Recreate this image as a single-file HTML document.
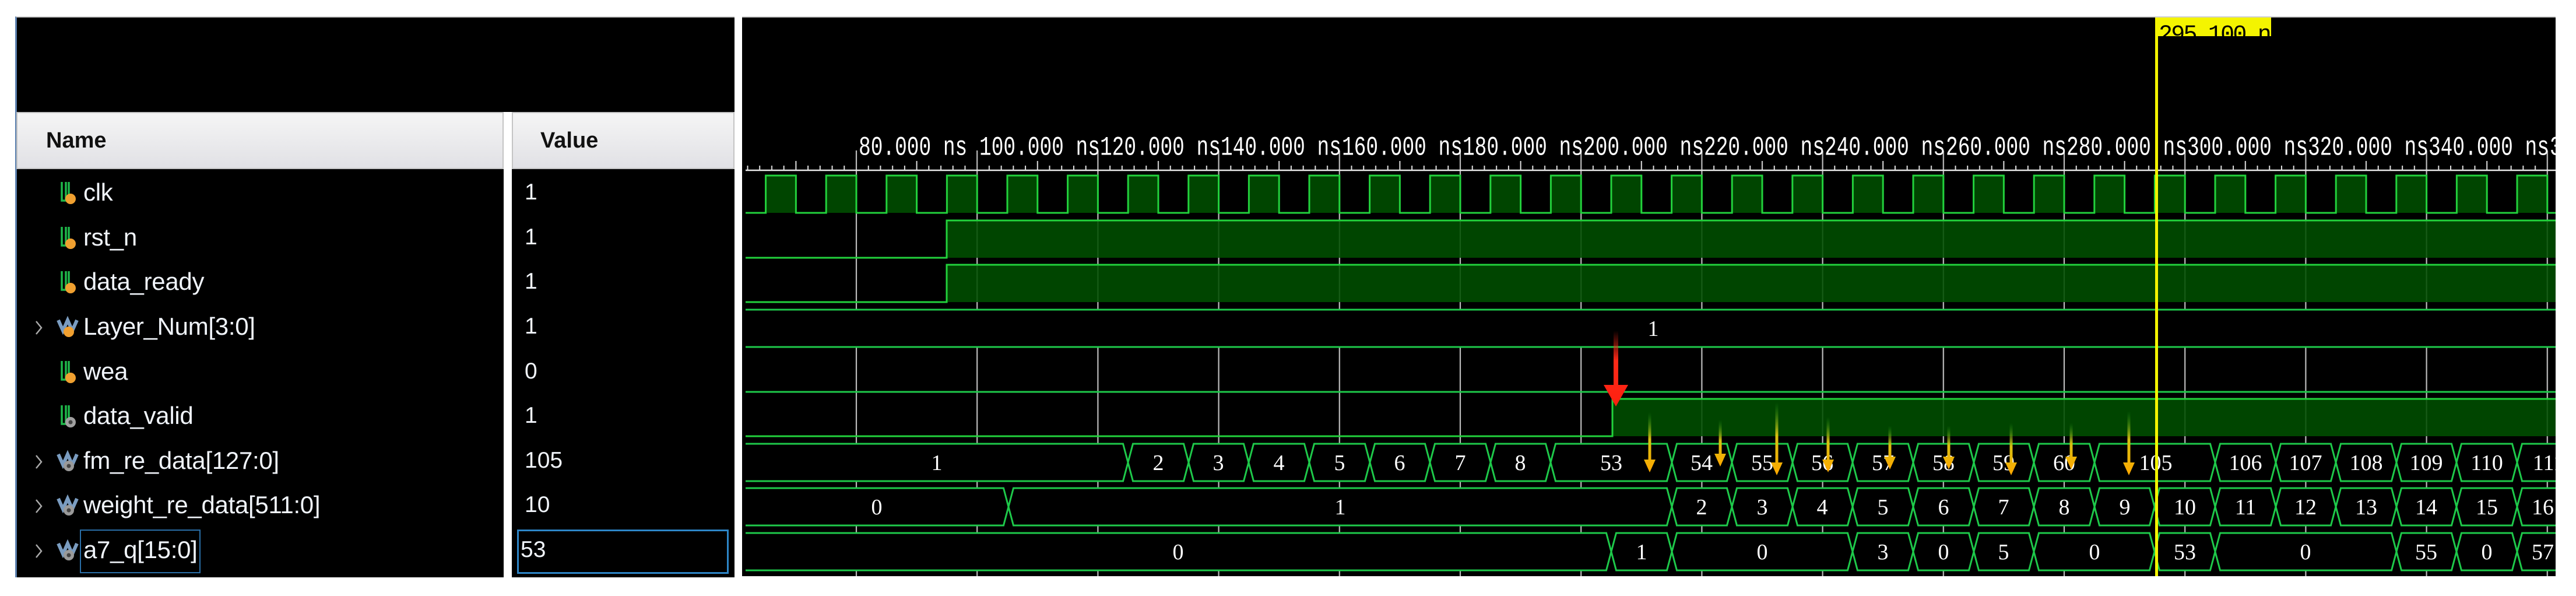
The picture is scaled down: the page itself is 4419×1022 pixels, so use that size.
<!DOCTYPE html>
<html><head><meta charset="utf-8"><style>
html,body{margin:0;padding:0;background:#fff;width:4419px;height:1022px;overflow:hidden;position:relative;font-family:"Liberation Sans",sans-serif}
.a{position:absolute}
.hdr{background:linear-gradient(#f5f5f5,#e1e1e5);border:2px solid #c4c4c4;box-sizing:border-box;font-weight:bold;font-size:38px;color:#111;line-height:94px}
.nm{position:absolute;left:143px;color:#f0f4fa;font-size:42px;line-height:50px;height:50px;letter-spacing:-0.3px}
.vl{position:absolute;left:900px;color:#f0f4fa;font-size:39px;line-height:50px;height:50px}
</style></head><body>
<div class="a" style="left:26px;top:28px;width:1234px;height:962px;background:#000;border-top:2px solid #d0d0d0;border-left:3px solid #5a7fae;box-sizing:border-box"></div>
<div class="a" style="left:864px;top:192px;width:14px;height:798px;background:#fff"></div>
<div class="a hdr" style="left:28px;top:192px;width:836px;height:98px;padding-left:49px">Name</div>
<div class="a hdr" style="left:878px;top:192px;width:382px;height:98px;padding-left:47px">Value</div>

<div class="nm" style="top:305px">clk</div>
<div class="nm" style="top:382px">rst_n</div>
<div class="nm" style="top:458px">data_ready</div>
<div class="nm" style="top:535px">Layer_Num[3:0]</div>
<div class="nm" style="top:612px">wea</div>
<div class="nm" style="top:688px">data_valid</div>
<div class="nm" style="top:765px">fm_re_data[127:0]</div>
<div class="nm" style="top:841px">weight_re_data[511:0]</div>
<div class="nm" style="top:918px">a7_q[15:0]</div>
<div class="a" style="left:137px;top:908px;width:207px;height:75px;border:2px solid #2a6fa8;box-sizing:border-box"></div>

<div class="vl" style="top:305px">1</div>
<div class="vl" style="top:382px">1</div>
<div class="vl" style="top:458px">1</div>
<div class="vl" style="top:535px">1</div>
<div class="vl" style="top:612px">0</div>
<div class="vl" style="top:688px">1</div>
<div class="vl" style="top:765px">105</div>
<div class="vl" style="top:841px">10</div>
<div class="vl" style="top:918px;left:893px">53</div>
<div class="a" style="left:887px;top:908px;width:363px;height:76px;border:3px solid #2d86c8;box-sizing:border-box"></div>

<svg class="a" style="left:0;top:0" width="1260" height="1000">
<defs>
<g id="bit"><path d="M4,2 V34 H11 V2 M16,2 V26" stroke="#1fb84a" stroke-width="3.5" fill="none"/><circle cx="19" cy="31" r="9" fill="#f0a030"/></g>
<g id="busO"><path d="M2,6 L10,24 L18,6 L26,24 L34,6" stroke="#7a9cc0" stroke-width="6" fill="none"/><circle cx="20" cy="26" r="9" fill="#f0a030"/></g>
<g id="busG"><path d="M2,6 L10,24 L18,6 L26,24 L34,6" stroke="#7a9cc0" stroke-width="6" fill="none"/><circle cx="20" cy="26" r="9" fill="#9a9a9a"/><circle cx="20" cy="26" r="3.5" fill="#444"/></g>
<g id="bitG"><path d="M4,2 V34 H11 V2 M16,2 V26" stroke="#1fb84a" stroke-width="3.5" fill="none"/><circle cx="19" cy="31" r="9" fill="#a0a0a0"/><circle cx="19" cy="31" r="3.5" fill="#444"/></g>
<polyline id="chev" points="0,0 9,11 0,22" stroke="#aaa" stroke-width="2.5" fill="none"/>
</defs>
<use href="#bit" x="102" y="310"/>
<use href="#bit" x="102" y="387"/>
<use href="#bit" x="102" y="463"/>
<use href="#busO" x="98" y="543"/>
<use href="#bit" x="102" y="617"/>
<use href="#bitG" x="102" y="693"/>
<use href="#busG" x="98" y="773"/>
<use href="#busG" x="98" y="849"/>
<use href="#busG" x="98" y="926"/>
<use href="#chev" x="62" y="551"/>
<use href="#chev" x="62" y="781"/>
<use href="#chev" x="62" y="857"/>
<use href="#chev" x="62" y="934"/>
</svg>

<div class="a" style="left:1273px;top:28px;width:3111px;height:960px;background:#000;border-top:2px solid #d0d0d0;box-sizing:border-box"></div>
<svg class="a" style="left:0;top:0" width="4419" height="1022">
<defs>
<clipPath id="cp"><rect x="1279" y="30" width="3105" height="958"/></clipPath>
<pattern id="grid" patternUnits="userSpaceOnUse" x="1464" y="0" width="207.2" height="1022"><line x1="5" y1="258" x2="5" y2="988" stroke="#bdbdbd" stroke-width="2.2"/></pattern>
<pattern id="tick" patternUnits="userSpaceOnUse" x="1469" y="0" width="207.2" height="1022"><path d="M20.72,284V292M41.44,284V292M62.16,284V292M82.88,284V292M103.6,276V292M124.32,284V292M145.04,284V292M165.76,284V292M186.48,284V292" stroke="#e0e0e0" stroke-width="2"/></pattern>
<pattern id="clk" patternUnits="userSpaceOnUse" x="1303.6" y="0" width="103.6" height="1022"><rect x="10" y="301" width="51.8" height="64" fill="#004e00" fill-opacity="0.88"/><path d="M0,365H10V301H61.8V365H103.6" stroke="#22d23c" stroke-width="3" fill="none"/></pattern>
<linearGradient id="og" x1="0" y1="0" x2="0" y2="1"><stop offset="0" stop-color="#20a020" stop-opacity="0"/><stop offset="0.45" stop-color="#d8c010"/><stop offset="1" stop-color="#ffa800"/></linearGradient>
<linearGradient id="rg" x1="0" y1="0" x2="0" y2="1"><stop offset="0" stop-color="#ff2010" stop-opacity="0"/><stop offset="0.4" stop-color="#ff2a18"/><stop offset="1" stop-color="#ff2010"/></linearGradient>
</defs>
<g clip-path="url(#cp)">
<rect x="1279" y="250" width="3105" height="740" fill="url(#grid)"/>
<rect x="1279" y="270" width="3105" height="24" fill="url(#tick)"/>
<line x1="1279" y1="292" x2="4384" y2="292" stroke="#e8e8e8" stroke-width="2.5"/>
<rect x="1279" y="295" width="3105" height="75" fill="url(#clk)"/>
<rect x="1624" y="378" width="2760" height="64" fill="#004e00" fill-opacity="0.88"/>
<path d="M1279,442H1624V378H4384" stroke="#22d23c" stroke-width="3" fill="none"/>
<rect x="1624" y="454" width="2760" height="64" fill="#004e00" fill-opacity="0.88"/>
<path d="M1279,518H1624V454H4384" stroke="#22d23c" stroke-width="3" fill="none"/>
<rect x="1279" y="531" width="3105" height="64" fill="#000"/>
<path d="M1279,531H4384M1279,595H4384" stroke="#1ec94a" stroke-width="3"/>
<path d="M1279,672H4384" stroke="#1ec94a" stroke-width="3"/>
<rect x="2766" y="684" width="1618" height="64" fill="#004e00" fill-opacity="0.88"/>
<path d="M1279,748H2766V684H4384" stroke="#22d23c" stroke-width="3" fill="none"/>
<path fill="#000" stroke="#1ec94a" stroke-width="3" d="M1279,761H1926.5L1935,793L1926.5,825H1279
M1943.5,761H2030.5L2039,793L2030.5,825H1943.5L1935,793Z
M2047.5,761H2133.5L2142,793L2133.5,825H2047.5L2039,793Z
M2150.5,761H2237.5L2246,793L2237.5,825H2150.5L2142,793Z
M2254.5,761H2341.5L2350,793L2341.5,825H2254.5L2246,793Z
M2358.5,761H2444.5L2453,793L2444.5,825H2358.5L2350,793Z
M2461.5,761H2548.5L2557,793L2548.5,825H2461.5L2453,793Z
M2565.5,761H2651.5L2660,793L2651.5,825H2565.5L2557,793Z
M2668.5,761H2859.5L2868,793L2859.5,825H2668.5L2660,793Z
M2876.5,761H2962.5L2971,793L2962.5,825H2876.5L2868,793Z
M2979.5,761H3066.5L3075,793L3066.5,825H2979.5L2971,793Z
M3083.5,761H3169.5L3178,793L3169.5,825H3083.5L3075,793Z
M3186.5,761H3273.5L3282,793L3273.5,825H3186.5L3178,793Z
M3290.5,761H3377.5L3386,793L3377.5,825H3290.5L3282,793Z
M3394.5,761H3480.5L3489,793L3480.5,825H3394.5L3386,793Z
M3497.5,761H3584.5L3593,793L3584.5,825H3497.5L3489,793Z
M3601.5,761H3791.5L3800,793L3791.5,825H3601.5L3593,793Z
M3808.5,761H3895.5L3904,793L3895.5,825H3808.5L3800,793Z
M3912.5,761H3998.5L4007,793L3998.5,825H3912.5L3904,793Z
M4015.5,761H4102.5L4111,793L4102.5,825H4015.5L4007,793Z
M4119.5,761H4205.5L4214,793L4205.5,825H4119.5L4111,793Z
M4222.5,761H4309.5L4318,793L4309.5,825H4222.5L4214,793Z
M4390,761H4326.5L4318,793L4326.5,825H4390"/>
<path fill="#000" stroke="#1ec94a" stroke-width="3" d="M1279,837H1721.5L1730,869L1721.5,901H1279
M1738.5,837H2859.5L2868,869L2859.5,901H1738.5L1730,869Z
M2876.5,837H2962.5L2971,869L2962.5,901H2876.5L2868,869Z
M2979.5,837H3066.5L3075,869L3066.5,901H2979.5L2971,869Z
M3083.5,837H3169.5L3178,869L3169.5,901H3083.5L3075,869Z
M3186.5,837H3273.5L3282,869L3273.5,901H3186.5L3178,869Z
M3290.5,837H3377.5L3386,869L3377.5,901H3290.5L3282,869Z
M3394.5,837H3480.5L3489,869L3480.5,901H3394.5L3386,869Z
M3497.5,837H3584.5L3593,869L3584.5,901H3497.5L3489,869Z
M3601.5,837H3687.5L3696,869L3687.5,901H3601.5L3593,869Z
M3704.5,837H3791.5L3800,869L3791.5,901H3704.5L3696,869Z
M3808.5,837H3895.5L3904,869L3895.5,901H3808.5L3800,869Z
M3912.5,837H3998.5L4007,869L3998.5,901H3912.5L3904,869Z
M4015.5,837H4102.5L4111,869L4102.5,901H4015.5L4007,869Z
M4119.5,837H4205.5L4214,869L4205.5,901H4119.5L4111,869Z
M4222.5,837H4309.5L4318,869L4309.5,901H4222.5L4214,869Z
M4390,837H4326.5L4318,869L4326.5,901H4390"/>
<path fill="#000" stroke="#1ec94a" stroke-width="3" d="M1279,914H2755.5L2764,946L2755.5,978H1279
M2772.5,914H2859.5L2868,946L2859.5,978H2772.5L2764,946Z
M2876.5,914H3169.5L3178,946L3169.5,978H2876.5L2868,946Z
M3186.5,914H3273.5L3282,946L3273.5,978H3186.5L3178,946Z
M3290.5,914H3377.5L3386,946L3377.5,978H3290.5L3282,946Z
M3394.5,914H3480.5L3489,946L3480.5,978H3394.5L3386,946Z
M3497.5,914H3687.5L3696,946L3687.5,978H3497.5L3489,946Z
M3704.5,914H3791.5L3800,946L3791.5,978H3704.5L3696,946Z
M3808.5,914H4102.5L4111,946L4102.5,978H3808.5L3800,946Z
M4119.5,914H4205.5L4214,946L4205.5,978H4119.5L4111,946Z
M4222.5,914H4309.5L4318,946L4309.5,978H4222.5L4214,946Z
M4390,914H4326.5L4318,946L4326.5,978H4390"/>

<g transform="scale(1,1.35)" font-family="Liberation Mono, monospace" font-size="34.5" fill="#fff">
<text x="1473" y="196.5">80.000 ns</text>
<text x="1680" y="196.5">100.000 ns</text>
<text x="1887" y="196.5">120.000 ns</text>
<text x="2094" y="196.5">140.000 ns</text>
<text x="2302" y="196.5">160.000 ns</text>
<text x="2509" y="196.5">180.000 ns</text>
<text x="2716" y="196.5">200.000 ns</text>
<text x="2923" y="196.5">220.000 ns</text>
<text x="3130" y="196.5">240.000 ns</text>
<text x="3338" y="196.5">260.000 ns</text>
<text x="3545" y="196.5">280.000 ns</text>
<text x="3752" y="196.5">300.000 ns</text>
<text x="3959" y="196.5">320.000 ns</text>
<text x="4166" y="196.5">340.000 ns</text>
<text x="4374" y="196.5">360.000 ns</text>
</g>

<g font-family="Liberation Serif, serif" font-size="38" fill="#fff" text-anchor="middle">
<text x="2836" y="576">1</text>
<text x="1607" y="806">1</text><text x="1987" y="806">2</text><text x="2090" y="806">3</text><text x="2194" y="806">4</text><text x="2298" y="806">5</text><text x="2401" y="806">6</text><text x="2505" y="806">7</text><text x="2608" y="806">8</text><text x="2764" y="806">53</text><text x="2919" y="806">54</text><text x="3023" y="806">55</text><text x="3126" y="806">56</text><text x="3230" y="806">57</text><text x="3334" y="806">58</text><text x="3437" y="806">59</text><text x="3541" y="806">60</text><text x="3698" y="806">105</text><text x="3852" y="806">106</text><text x="3955" y="806">107</text><text x="4059" y="806">108</text><text x="4162" y="806">109</text><text x="4266" y="806">110</text><text x="4372" y="806">111</text>
<text x="1504" y="882">0</text><text x="2299" y="882">1</text><text x="2919" y="882">2</text><text x="3023" y="882">3</text><text x="3126" y="882">4</text><text x="3230" y="882">5</text><text x="3334" y="882">6</text><text x="3437" y="882">7</text><text x="3541" y="882">8</text><text x="3645" y="882">9</text><text x="3748" y="882">10</text><text x="3852" y="882">11</text><text x="3955" y="882">12</text><text x="4059" y="882">13</text><text x="4162" y="882">14</text><text x="4266" y="882">15</text><text x="4362" y="882">16</text>
<text x="2021" y="959">0</text><text x="2816" y="959">1</text><text x="3023" y="959">0</text><text x="3230" y="959">3</text><text x="3334" y="959">0</text><text x="3437" y="959">5</text><text x="3593" y="959">0</text><text x="3748" y="959">53</text><text x="3955" y="959">0</text><text x="4162" y="959">55</text><text x="4266" y="959">0</text><text x="4362" y="959">57</text>
</g>

<g fill="url(#og)">
<path d="M2827.5,707H2832.5V788H2840L2830,810L2820,788H2827.5Z"/>
<path d="M2948.5,720H2953.5V778H2961L2951,800L2941,778H2948.5Z"/>
<path d="M3045.5,690H3050.5V793H3058L3048,815L3038,793H3045.5Z"/>
<path d="M3133.5,715H3138.5V788H3146L3136,810L3126,788H3133.5Z"/>
<path d="M3239.5,730H3244.5V783H3252L3242,805L3232,783H3239.5Z"/>
<path d="M3340.5,730H3345.5V783H3353L3343,805L3333,783H3340.5Z"/>
<path d="M3447.5,725H3452.5V793H3460L3450,815L3440,793H3447.5Z"/>
<path d="M3550.5,725H3555.5V783H3563L3553,805L3543,783H3550.5Z"/>
<path d="M3649.5,705H3654.5V793H3662L3652,815L3642,793H3649.5Z"/>
</g>
<path fill="url(#rg)" d="M2768,567H2776V660H2793L2772,697L2751,660H2768Z"/>
</g>

<rect x="3697" y="30" width="5" height="958" fill="#f4f400"/>
<svg x="3701" y="30" width="195" height="32"><rect width="195" height="32" fill="#f4f400"/><text x="2" y="40" font-family="Liberation Mono, monospace" font-size="40" fill="#000" textLength="215">295.100 ns</text></svg>
</svg>
</body></html>
